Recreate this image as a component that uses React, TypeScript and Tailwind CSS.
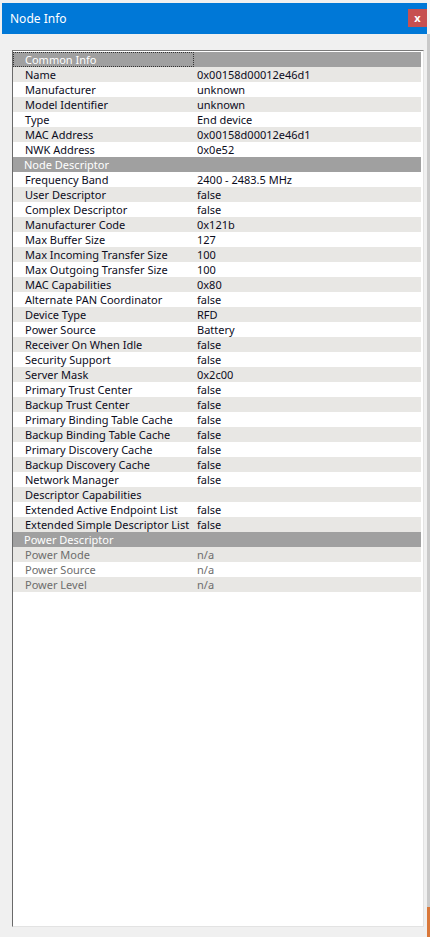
type Row = { label: string; value?: string; header?: boolean; disabled?: boolean };

const rows: Row[] = [
  { label: 'Common Info', header: true },
  { label: 'Name', value: '0x00158d00012e46d1' },
  { label: 'Manufacturer', value: 'unknown' },
  { label: 'Model Identifier', value: 'unknown' },
  { label: 'Type', value: 'End device' },
  { label: 'MAC Address', value: '0x00158d00012e46d1' },
  { label: 'NWK Address', value: '0x0e52' },
  { label: 'Node Descriptor', header: true },
  { label: 'Frequency Band', value: '2400 - 2483.5 MHz' },
  { label: 'User Descriptor', value: 'false' },
  { label: 'Complex Descriptor', value: 'false' },
  { label: 'Manufacturer Code', value: '0x121b' },
  { label: 'Max Buffer Size', value: '127' },
  { label: 'Max Incoming Transfer Size', value: '100' },
  { label: 'Max Outgoing Transfer Size', value: '100' },
  { label: 'MAC Capabilities', value: '0x80' },
  { label: 'Alternate PAN Coordinator', value: 'false' },
  { label: 'Device Type', value: 'RFD' },
  { label: 'Power Source', value: 'Battery' },
  { label: 'Receiver On When Idle', value: 'false' },
  { label: 'Security Support', value: 'false' },
  { label: 'Server Mask', value: '0x2c00' },
  { label: 'Primary Trust Center', value: 'false' },
  { label: 'Backup Trust Center', value: 'false' },
  { label: 'Primary Binding Table Cache', value: 'false' },
  { label: 'Backup Binding Table Cache', value: 'false' },
  { label: 'Primary Discovery Cache', value: 'false' },
  { label: 'Backup Discovery Cache', value: 'false' },
  { label: 'Network Manager', value: 'false' },
  { label: 'Descriptor Capabilities', value: '' },
  { label: 'Extended Active Endpoint List', value: 'false' },
  { label: 'Extended Simple Descriptor List', value: 'false' },
  { label: 'Power Descriptor', header: true },
  { label: 'Power Mode', value: 'n/a', disabled: true },
  { label: 'Power Source', value: 'n/a', disabled: true },
  { label: 'Power Level', value: 'n/a', disabled: true },
];

// NodeInfo mimics a small WinForms-style property grid window.
export default function App() {
  return (
    <div className="flex h-[937px] w-[430px] bg-[#f0f0f0] font-['Noto_Sans',sans-serif] text-[11px] leading-[15px]">
      <div className="flex w-[427px] flex-col pl-[2px] pt-[3px]">
        <div className="flex h-[31px] items-center justify-between bg-[#0078d7] pl-[8px]">
          <span className="text-[12px] text-white">Node Info</span>
          <button
            type="button"
            className="mb-[2px] flex h-[18px] w-[19px] items-center justify-center bg-[#c75050] text-[11px] font-bold leading-none text-white"
          >
            x
          </button>
        </div>

        <div className="flex flex-1 flex-col pb-[10px] pl-[10px] pr-[3px] pt-[16px]">
          <div className="flex flex-1 flex-col border border-l-[#6a6a6a] border-t-[#7a7a7a] border-r-[#e3e3e3] border-b-[#e3e3e3] bg-white pr-[2px] pt-[1px]">
            {rows.map((row, i) => (
              <GridRow key={i} row={row} odd={i % 2 === 1} first={i === 0} />
            ))}
          </div>
        </div>
      </div>
      <div className="flex w-[3px] flex-col">
        <div className="h-[34px] bg-[#f5f5f5]" />
        <div className="flex-1 bg-[#c9c9c9]" />
        <div className="h-[30px] bg-[#d9783a]" />
      </div>
    </div>
  );
}

function GridRow({ row, odd, first }: { row: Row; odd: boolean; first: boolean }) {
  if (row.header) {
    return (
      <div className="flex h-[15px] bg-[#a0a0a0] text-white">
        <div
          className={
            'w-[181px] whitespace-nowrap pl-[11px] ' +
            (first ? 'border border-dotted border-[#333] leading-[13px]' : '')
          }
        >
          {row.label}
        </div>
      </div>
    );
  }
  return (
    <div
      className={
        'flex h-[15px] ' +
        (odd ? 'bg-[#e8e7e4] ' : 'bg-white ') +
        (row.disabled ? 'text-[#6d6d6d]' : 'text-[#0c0c1c]')
      }
    >
      <div className="w-[181px] overflow-hidden whitespace-nowrap pl-[12px]">{row.label}</div>
      <div className="flex-1 whitespace-nowrap pl-[3px]">{row.value}</div>
    </div>
  );
}
